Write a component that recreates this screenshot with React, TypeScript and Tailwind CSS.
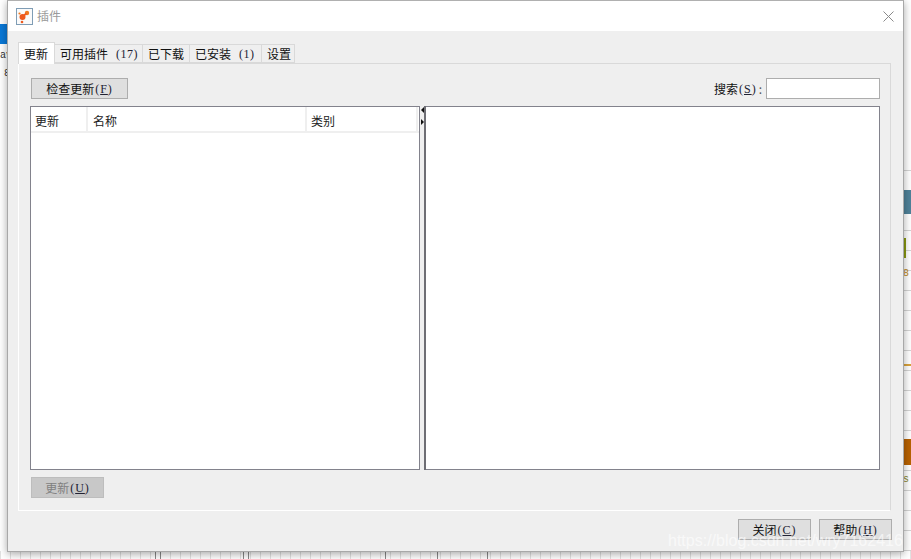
const cjk = "font-['Noto_Sans_CJK_SC','Noto_Sans',sans-serif]";

function Key({ k }: { k: string }) {
  return (
    <span className="font-['Liberation_Serif',serif] text-[12px] tracking-[1px] ml-[1px] text-[#223]">
      (<span className="underline">{k}</span>)
    </span>
  );
}

function Btn({ label, k, disabled, w }: { label: string; k: string; disabled?: boolean; w: string }) {
  return (
    <div
      className={`${w} h-[21px] flex items-center justify-center border text-[12px] ${
        disabled ? 'bg-[#c8c8c8] border-[#bdbdbd] text-[#808080]' : 'bg-[#dfdfdf] border-[#adadad] text-[#111]'
      }`}
    >
      {label}
      <Key k={k} />
    </div>
  );
}

function Tab({ children, active, w }: { children: React.ReactNode; active?: boolean; w: string }) {
  return (
    <div
      className={
        active
          ? `${w} h-[22px] pl-[5px] flex items-center bg-white border-t border-l border-r border-[#d9d9d9] text-[12px] text-[#111] relative z-10 -mb-px whitespace-nowrap`
          : `${w} h-[19px] pl-[5px] pt-[1px] flex items-center bg-[#efefef] border-t border-r border-[#d9d9d9] border-b text-[12px] text-[#111] whitespace-nowrap`
      }
    >
      {children}
    </div>
  );
}

function Background() {
  return (
    <>
      <div className="absolute left-0 top-[24px] w-[8px] h-[20px] bg-[#0a78d7]" />
      <div className="absolute left-0 top-[48px] w-[8px] text-[10px] font-['Liberation_Mono',monospace] text-[#333]">av</div>
      <div className="absolute left-[4px] top-[66px] text-[10px] font-['Liberation_Mono',monospace] text-[#333]">8</div>
      <div className="absolute left-[903px] top-[170px] w-[8px] h-[389px] bg-[repeating-linear-gradient(to_bottom,#d4d4d4_0,#d4d4d4_1px,transparent_1px,transparent_20px)]" />
      <div className="absolute left-[903px] top-[190px] w-[8px] h-[24px] bg-[#4f8299]" />
      <div className="absolute left-[903px] top-[238px] w-[3px] h-[20px] bg-[#8a9a10]" />
      <div className="absolute left-[903px] top-[268px] w-[8px] text-[10px] leading-[12px] font-['Liberation_Mono',monospace] text-[#c08a1a]">8</div>
      <div className="absolute left-[903px] top-[364px] w-[8px] h-[2px] bg-[#d9a23b]" />
      <div className="absolute left-[904px] top-[439px] w-[7px] h-[26px] bg-[#b86200]" />
      <div className="absolute left-[903px] top-[474px] w-[8px] text-[10px] leading-[12px] font-['Liberation_Mono',monospace] text-[#8a8a30]">s</div>
      <div className="absolute left-0 top-[551px] w-[911px] h-[8px] bg-[repeating-linear-gradient(to_right,#e2e2e2_0,#e2e2e2_1px,transparent_1px,transparent_10px)]" />
      <div className="absolute left-[155px] top-[551px] w-[6px] h-[8px] border-x border-[#888]" />
      <div className="absolute left-[243px] top-[551px] w-[6px] h-[8px] border-x border-[#888]" />
      <div className="absolute left-[385px] top-[551px] w-[1px] h-[8px] bg-[#888]" />
      <div className="absolute left-[437px] top-[551px] w-[1px] h-[8px] bg-[#888]" />
      <div className="absolute left-[487px] top-[551px] w-[1px] h-[8px] bg-[#888]" />
    </>
  );
}

export default function App() {
  return (
    <div className={`relative w-[911px] h-[559px] overflow-hidden bg-white ${cjk}`}>
      <Background />
      <div className="relative ml-[7px] w-[897px] h-[552px] flex flex-col border border-[#a8a8a8] border-t-[#b0b0b0] bg-[#efefef] shadow-[0_2px_8px_rgba(0,0,0,0.35)]">
        {/* Title bar */}
        <div className="h-[30px] bg-white flex items-center pl-[8px] pr-[8px] shrink-0">
          <svg width="17" height="17" viewBox="0 0 17 17" className="shrink-0">
            <rect x="0.5" y="0.5" width="16" height="16" fill="#fafafa" stroke="#7f9db5" />
            <circle cx="6.5" cy="9" r="3" fill="#ee5a1e" />
            <circle cx="11" cy="5" r="2.2" fill="#f07a20" />
            <circle cx="6" cy="14" r="1.3" fill="#ee5a1e" />
            <circle cx="3.5" cy="5.5" r="1.1" fill="#f07a20" />
            <path d="M7 8 L10.5 5.5" stroke="#ee5a1e" strokeWidth="2" />
          </svg>
          <span className="ml-[4px] text-[12px] text-[#9a9a9a]">插件</span>
          <svg width="11" height="11" viewBox="0 0 11 11" className="ml-auto mr-[1px]">
            <path d="M0.5 0.5 L10.5 10.5 M10.5 0.5 L0.5 10.5" stroke="#8a8a8a" strokeWidth="1" fill="none" />
          </svg>
        </div>

        {/* Body */}
        <div className="flex-1 flex flex-col px-[10px] pt-[11px]">
          <div className="flex items-end h-[21px] shrink-0">
            <Tab active w="w-[37px]">更新</Tab>
            <Tab w="w-[88px]">可用插件<span className="ml-[8px] font-['Liberation_Serif',serif] text-[12px] tracking-[0.5px] text-[#223]">(17)</span></Tab>
            <Tab w="w-[47px]">已下载</Tab>
            <Tab w="w-[72px]">已安装<span className="ml-[8px] font-['Liberation_Serif',serif] text-[12px] tracking-[0.5px] text-[#223]">(1)</span></Tab>
            <Tab w="w-[33px]">设置</Tab>
          </div>

          {/* Tab panel */}
          <div className="w-[873px] h-[448px] border border-[#d9d9d9] border-b-white border-l-white flex flex-col bg-[#efefef] pl-[11px] pr-[10px] pt-[14px] shrink-0">
            <div className="flex items-center justify-between h-[21px] shrink-0 pl-[1px]">
              <Btn label="检查更新" k="F" w="w-[97px]" />
              <div className="flex items-center">
                <span className="text-[12px] text-[#111]">搜索</span>
                <Key k="S" />
                <span className="text-[12px] text-[#555] ml-[2px] mr-[4px]">:</span>
                <div className="w-[114px] h-[21px] bg-white border border-[#adadad]" />
              </div>
            </div>

            <div className="flex mt-[7px] h-[364px] shrink-0">
              <div className="w-[390px] h-full bg-white border border-[#82828c] shrink-0">
                <div className="flex h-[26px] border-b-2 border-[#efefef] text-[12px] text-[#222] pr-[1px]">
                  <div className="w-[57px] pl-[4px] pt-[3px] flex items-center border-r-2 border-[#efefef]">更新</div>
                  <div className="w-[219px] pl-[5px] pt-[3px] flex items-center border-r-2 border-[#efefef]">名称</div>
                  <div className="flex-1 pl-[4px] pt-[3px] flex items-center border-r-2 border-[#efefef]">类别</div>
                </div>
              </div>
              <div className="w-[6px] relative shrink-0 border-r-2 border-[#6e6e74]">
                <svg width="4" height="22" viewBox="0 0 4 22" className="absolute left-0 top-0">
                  <path d="M4 1 V7 L1 4 Z" fill="#111" />
                  <path d="M1 13 V19 L4 16 Z" fill="#111" />
                </svg>
              </div>
              <div className="w-[454px] h-full bg-white border border-[#82828c] border-l-0 shrink-0" />
            </div>

            <div className="mt-[7px] pl-[1px]">
              <Btn label="更新" k="U" w="w-[73px]" disabled />
            </div>
          </div>

          {/* Footer */}
          <div className="flex justify-end gap-[8px] mt-[8px] pr-[1px]">
            <Btn label="关闭" k="C" w="w-[73px]" />
            <Btn label="帮助" k="H" w="w-[73px]" />
          </div>
        </div>
      </div>

      {/* Watermark */}
      <div className="absolute left-[668px] top-[531px] font-['Liberation_Sans',sans-serif] text-[16px] leading-[20px] text-white/60 whitespace-nowrap">
        https://blog.csdn.net/wry7162416
      </div>
    </div>
  );
}
